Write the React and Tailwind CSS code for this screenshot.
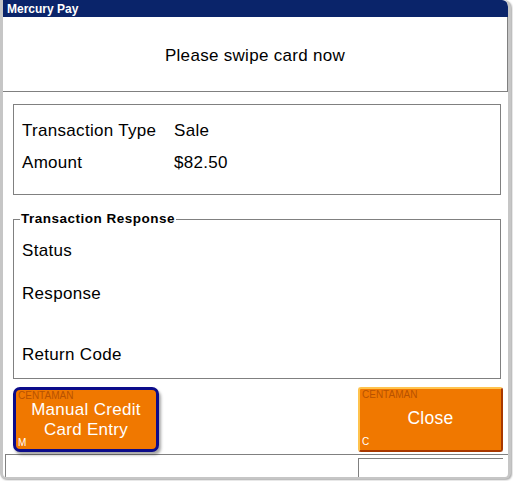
// App.jsx - Mercury Pay swipe dialog

import React from "react";

const rowText = "text-[17px] tracking-[0.3px] text-black";

const InfoRow = ({ label, value }) => (
  <div className="flex h-[32px] items-center">
    <span className={`w-[152px] ${rowText}`}>{label}</span>
    <span className={rowText}>{value}</span>
  </div>
);

const ResponseRow = ({ label, className }) => (
  <div className={`flex h-[24px] items-center pl-[8px] ${className || ""}`}>
    <span className={rowText}>{label}</span>
  </div>
);

const App = () => {
  return (
    <div className="w-[513px] h-[481px] bg-white font-['Liberation_Sans',Arial,sans-serif]">
      <div className="w-[511px] h-[479px] flex flex-col overflow-hidden bg-white border-l-[3px] border-r-[3px] border-b-[2px] border-[#c6c6c6] rounded-tr-[7px] rounded-b-[6px] shadow-[1px_1px_2px_rgba(0,0,0,0.35)]">
        {/* title bar */}
        <div className="h-[17px] shrink-0 bg-[#0a246a] flex items-center pl-[4px] rounded-tr-[6px]">
          <span className="text-white text-[12px] font-bold leading-none">Mercury Pay</span>
        </div>

        {/* prompt */}
        <div className="h-[75px] shrink-0 flex items-center justify-center pt-[3px] border-b border-r border-[#808080]">
          <span className="text-[17px] tracking-[0.3px] text-black">Please swipe card now</span>
        </div>

        {/* transaction details */}
        <div className="ml-[10px] mt-[12px] w-[488px] h-[91px] shrink-0 border border-[#808080] pt-[10px] pl-[8px]">
          <InfoRow label="Transaction Type" value="Sale" />
          <InfoRow label="Amount" value="$82.50" />
        </div>

        {/* transaction response */}
        <fieldset className="ml-[10px] mt-[16px] w-[488px] h-[168px] shrink-0 border border-[#808080]">
          <legend className="ml-[6px] px-[1px] text-[13.5px] font-bold tracking-[0.5px] leading-[16px] text-black">
            Transaction Response
          </legend>
          <ResponseRow label="Status" className="mt-[12px]" />
          <ResponseRow label="Response" className="mt-[19px]" />
          <ResponseRow label="Return Code" className="mt-[37px]" />
        </fieldset>

        {/* buttons */}
        <div className="mt-[8px] flex justify-between pl-[10px] pr-[5px] shrink-0">
          <button className="relative w-[146px] h-[65px] rounded-[7px] border-[3px] border-[#0c0c8a] bg-[#f07800] shadow-[2px_3px_3px_rgba(0,0,0,0.35)] flex flex-col items-center justify-center gap-[2px] pt-[1px]">
            <span className="absolute top-[1px] left-[2px] text-[10px] leading-none text-[#b85200]">CENTAMAN</span>
            <span className="block text-white text-[17px] tracking-[0.3px] leading-[18px]">Manual Credit</span>
            <span className="block text-white text-[17px] tracking-[0.3px] leading-[18px]">Card Entry</span>
            <span className="absolute bottom-[1px] left-[2px] text-[10px] leading-none text-white">M</span>
          </button>

          <button className="relative w-[145px] h-[65px] rounded-[3px] border-2 border-t-[#ffc34d] border-l-[#ffc34d] border-b-[#a83800] border-r-[#a83800] bg-[#f07800] flex items-center justify-center">
            <span className="absolute top-[1px] left-[2px] text-[10px] leading-none text-[#b85200]">CENTAMAN</span>
            <span className="text-white text-[17.5px] tracking-[0.3px] -mt-[2px]">Close</span>
            <span className="absolute bottom-[3px] left-[2px] text-[10px] leading-none text-white">C</span>
          </button>
        </div>

        {/* status bar */}
        <div className="mt-[2px] ml-[2px] flex-1 border-t border-l border-[#808080] flex justify-end pt-[3px] pr-[5px]">
          <div className="w-[145px] h-[20px] border-t border-l border-[#808080]" />
        </div>
      </div>
    </div>
  );
};

export default App;
